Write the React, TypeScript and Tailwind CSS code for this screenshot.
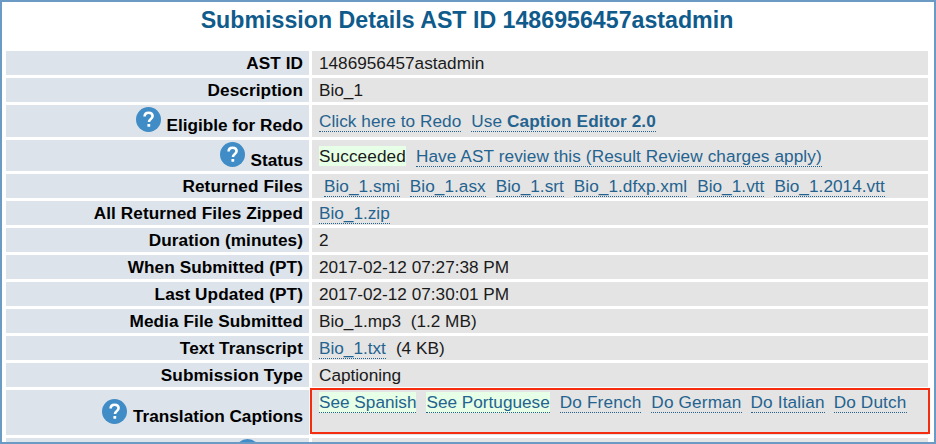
const HelpIcon = ({ className = "" }: { className?: string }) => (
  <svg viewBox="0 0 25 25" className={`inline-block w-[25px] h-[25px] ${className}`}>
    <circle cx="12.5" cy="12.5" r="12.5" fill="#408cc6" />
    <path
      d="M8.6 9.6c0-2.4 1.7-3.9 4-3.9 2.4 0 4 1.4 4 3.4 0 1.6-.9 2.4-2 3.2-1 .7-1.6 1.2-1.6 2.6"
      fill="none"
      stroke="#fff"
      strokeWidth="2.6"
    />
    <rect x="11.4" y="17" width="2.8" height="2.8" rx="0.6" fill="#fff" />
  </svg>
);

const DotLink = ({
  children,
  className = "",
}: {
  children: React.ReactNode;
  className?: string;
}) => (
  <a
    href="#"
    className={`inline-block mr-[10px] text-[#24638f] border-b border-dotted border-[#24638f] ${className}`}
  >
    {children}
  </a>
);

const Label = ({ children }: { children: React.ReactNode }) => (
  <td className="bg-[#dce3ea] text-right font-bold text-black pr-[6px] align-middle tracking-[0.08px]">
    {children}
  </td>
);

const Value = ({ children, className = "" }: { children: React.ReactNode; className?: string }) => (
  <td className={`bg-[#e4e4e4] text-[#1a1a1a] pl-[7px] align-middle whitespace-nowrap ${className}`}>{children}</td>
);

const IconLabel = ({
  text,
  pad = "pt-[2px]",
  iconGap = "mb-[3px]",
}: {
  text: string;
  pad?: string;
  iconGap?: string;
}) => (
  <td className={`bg-[#dce3ea] text-right font-bold text-black pr-[6px] align-top ${pad}`}>
    <span className="inline-flex items-end gap-[5px]">
      <HelpIcon className={iconGap} />
      <span>{text}</span>
    </span>
  </td>
);

export default function App() {
  const files = ["Bio_1.smi", "Bio_1.asx", "Bio_1.srt", "Bio_1.dfxp.xml", "Bio_1.vtt", "Bio_1.2014.vtt"];

  return (
    <div className="w-[936px] h-[444px] overflow-hidden bg-white border-2 border-[#6b9ac4] font-['Liberation_Sans',Arial,sans-serif] text-[17.2px] leading-[20px]">
      <h1 className="h-[34px] pt-[3px] pr-[2px] text-center font-bold text-[23.2px] leading-[30px] text-[#0f5b8c]">
        Submission Details AST ID 1486956457astadmin
      </h1>
      <table className="ml-[1px] mt-[12px] w-[928px] border-separate border-spacing-[3px] table-fixed">
        <colgroup>
          <col className="w-[303px]" />
          <col />
        </colgroup>
        <tbody>
          <tr className="h-[24px]">
            <Label>AST ID</Label>
            <Value>1486956457astadmin</Value>
          </tr>
          <tr className="h-[24px]">
            <Label>Description</Label>
            <Value>Bio_1</Value>
          </tr>
          <tr className="h-[32px]">
            <IconLabel text="Eligible for Redo" />
            <Value>
              <DotLink className="tracking-[0.05px]">Click here to Redo</DotLink>
              <DotLink className="tracking-[0.1px]">
                Use <b>Caption Editor 2.0</b>
              </DotLink>
            </Value>
          </tr>
          <tr className="h-[31px]">
            <IconLabel text="Status" />
            <Value className="pt-[1px]">
              <span className="inline-block mr-[10px] bg-[#e6ffe6] tracking-[0.1px]">Succeeded</span>
              <DotLink className="tracking-[0.1px]">Have AST review this (Result Review charges apply)</DotLink>
            </Value>
          </tr>
          <tr className="h-[24px]">
            <Label>Returned Files</Label>
            <Value className="pt-[1px]">
              <span className="pl-[5px]">
                {files.map((f) => (
                  <DotLink key={f} className="tracking-[0.04px]">
                    {f}
                  </DotLink>
                ))}
              </span>
            </Value>
          </tr>
          <tr className="h-[24px]">
            <Label>All Returned Files Zipped</Label>
            <Value>
              <DotLink>Bio_1.zip</DotLink>
            </Value>
          </tr>
          <tr className="h-[24px]">
            <Label>Duration (minutes)</Label>
            <Value>2</Value>
          </tr>
          <tr className="h-[24px]">
            <Label>When Submitted (PT)</Label>
            <Value>2017-02-12 07:27:38 PM</Value>
          </tr>
          <tr className="h-[24px]">
            <Label>Last Updated (PT)</Label>
            <Value>2017-02-12 07:30:01 PM</Value>
          </tr>
          <tr className="h-[24px]">
            <Label>Media File Submitted</Label>
            <Value>Bio_1.mp3&nbsp; (1.2 MB)</Value>
          </tr>
          <tr className="h-[24px]">
            <Label>Text Transcript</Label>
            <Value>
              <DotLink>Bio_1.txt</DotLink>(4 KB)
            </Value>
          </tr>
          <tr className="h-[24px]">
            <Label>Submission Type</Label>
            <Value>Captioning</Value>
          </tr>
          <tr className="h-[45px]">
            <IconLabel text="Translation Captions" pad="pt-[9px]" iconGap="mb-[2px] mr-px" />
            <td className="relative bg-[#e4e4e4] pl-[7px] pt-[2px] align-top whitespace-nowrap">
              <DotLink className="bg-[#e6ffe6]">See Spanish</DotLink>
              <DotLink className="bg-[#e6ffe6]">See Portuguese</DotLink>
              <DotLink className="tracking-[0.15px]">Do French</DotLink>
              <DotLink className="tracking-[0.15px]">Do German</DotLink>
              <DotLink className="tracking-[0.15px] -ml-px">Do Italian</DotLink>
              <DotLink className="tracking-[0.15px] -ml-px">Do Dutch</DotLink>
              {/* red highlight drawn over the cell */}
              <span className="absolute -top-[2px] -left-[2px] -right-[2px] bottom-[1px] border-2 border-[#f42c10]" />
            </td>
          </tr>
          <tr className="h-[24px]">
            <td className="bg-[#dce3ea] text-right pr-[49px] align-top pt-[1px]">
              <HelpIcon />
            </td>
            <td className="bg-[#e4e4e4]" />
          </tr>
        </tbody>
      </table>
    </div>
  );
}
